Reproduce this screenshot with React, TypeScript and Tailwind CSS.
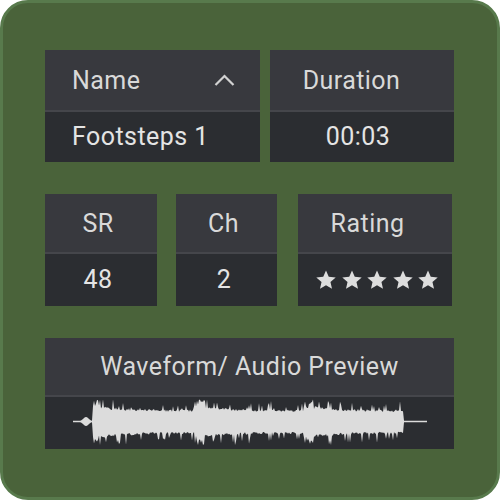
import React from "react";

function mulberry32(a: number) {
  return function () {
    a |= 0;
    a = (a + 0x6d2b79f5) | 0;
    let t = Math.imul(a ^ (a >>> 15), 1 | a);
    t = (t + Math.imul(t ^ (t >>> 7), 61 | t)) ^ t;
    return ((t ^ (t >>> 14)) >>> 0) / 4294967296;
  };
}

const BURSTS = [93, 195, 304];

function envelope(px: number): number {
  if (px < 73) return 0;
  if (px < 93) {
    const b = Math.exp(-Math.pow((px - 86) / 4, 2)) * 4.5;
    return Math.max(0.8, b);
  }
  if (px > 403) return 0.8;
  let e = 0;
  for (let i = 0; i < BURSTS.length; i++) {
    const s = BURSTS[i];
    if (px >= s) {
      const d = px - s;
      e = 11 + 5 * Math.exp(-d / 30);
    }
  }
  return e;
}

function buildWave(): string {
  const rand = mulberry32(4242);
  const cy = 24.5;
  const top: string[] = [];
  const bot: string[] = [];
  for (let px = 73; px <= 427; px += 1) {
    const x = px - 45;
    const e = envelope(px);
    let t = e;
    let b = e;
    if (px >= 93 && px <= 403) {
      t = e * (0.85 + 0.22 * rand());
      b = e * (0.9 + 0.22 * rand());
      if (rand() < 0.14) t = Math.min(22, t * (1.25 + 0.45 * rand()));
      if (rand() < 0.16) b = Math.min(23.5, b * (1.3 + 0.5 * rand()));
      const near = BURSTS.some((s) => px - s >= 0 && px - s < 10);
      if (near && rand() < 0.6) {
        t = 17 + 5 * rand();
        b = 18 + 5.5 * rand();
      }
    }
    top.push(`${x},${(cy - t).toFixed(1)}`);
    bot.unshift(`${x},${(cy + b).toFixed(1)}`);
  }
  return "M" + top.join(" L") + " L" + bot.join(" L") + " Z";
}

const WAVE = buildWave();

function starPoints(cx: number, cy: number, ro: number, ri: number): string {
  const pts: string[] = [];
  for (let i = 0; i < 10; i++) {
    const r = i % 2 === 0 ? ro : ri;
    const a = -Math.PI / 2 + (i * Math.PI) / 5;
    pts.push(`${(cx + r * Math.cos(a)).toFixed(2)},${(cy + r * Math.sin(a)).toFixed(2)}`);
  }
  return pts.join(" ");
}

const STAR = starPoints(10, 10.6, 10.2, 4.7);

function Star() {
  return (
    <svg width="20" height="20" viewBox="0 0 20 20">
      <polygon points={STAR} fill="#dddddd" />
    </svg>
  );
}

function Card({
  header,
  value,
  headerH,
  valueH,
  className,
}: {
  header: React.ReactNode;
  value: React.ReactNode;
  headerH: string;
  valueH: string;
  className?: string;
}) {
  return (
    <div className={"flex flex-col " + (className ?? "")}>
      <div className={"flex items-center bg-[#38393e] text-[#d9d9d9] " + headerH}>{header}</div>
      <div className="h-[2px] bg-[#45464b]" />
      <div className={"flex items-center bg-[#2b2d31] text-[#e4e4e4] " + valueH}>{value}</div>
    </div>
  );
}

export default function App() {
  return (
    <div className="w-[500px] h-[500px] bg-white">
      <div
        className="w-[500px] h-[500px] rounded-[28px] border-[3px] border-[#587a4c] bg-[#4a633a] pt-[47px] pl-[42px] pr-[43px] flex flex-col gap-[32px] text-[25px] tracking-[0.45px] leading-none"
        style={{ fontFamily: "Roboto, 'Noto Sans', sans-serif" }}
      >
        <div className="grid grid-cols-[215px_184px] gap-[10px]">
          <Card
            headerH="h-[60px]"
            valueH="h-[50px]"
            header={
              <div className="flex w-full items-center justify-between pl-[27px] pr-[25px]">
                <span>Name</span>
                <svg width="21" height="12" viewBox="0 0 21 12">
                  <polyline points="1.5,11 10.5,2 19.5,11" fill="none" stroke="#d2d2d2" strokeWidth="2.2" />
                </svg>
              </div>
            }
            value={<span className="pl-[27px] pb-[2px]">Footsteps 1</span>}
          />
          <Card
            headerH="h-[60px]"
            valueH="h-[50px]"
            header={<span className="w-full text-center pr-[21px]">Duration</span>}
            value={<span className="w-full text-center pr-[8px] pb-[2px]">00:03</span>}
          />
        </div>
        <div className="grid grid-cols-[112px_101px_156px] gap-x-[19px]">
          <Card
            headerH="h-[58px]"
            valueH="h-[52px]"
            header={<span className="w-full text-center pr-[6px]">SR</span>}
            value={<span className="w-full text-center pr-[6px] pb-[2px]">48</span>}
          />
          <Card
            headerH="h-[58px]"
            valueH="h-[52px]"
            header={<span className="w-full text-center pr-[6px]">Ch</span>}
            value={<span className="w-full text-center pr-[5px] pb-[2px]">2</span>}
          />
          <Card
            className="ml-[2px]"
            headerH="h-[58px]"
            valueH="h-[52px]"
            header={<span className="w-full text-center pr-[15px]">Rating</span>}
            value={
              <div className="flex w-full justify-center gap-[5.5px] pl-[4px]">
                <Star />
                <Star />
                <Star />
                <Star />
                <Star />
              </div>
            }
          />
        </div>
        <Card
          headerH="h-[57px]"
          valueH="h-[52px]"
          header={<span className="w-full text-center">Waveform/ Audio Preview</span>}
          value={
            <svg width="409" height="52" viewBox="0 0 409 52">
              <path d={WAVE} fill="#dcdcdc" />
            </svg>
          }
        />
      </div>
    </div>
  );
}
